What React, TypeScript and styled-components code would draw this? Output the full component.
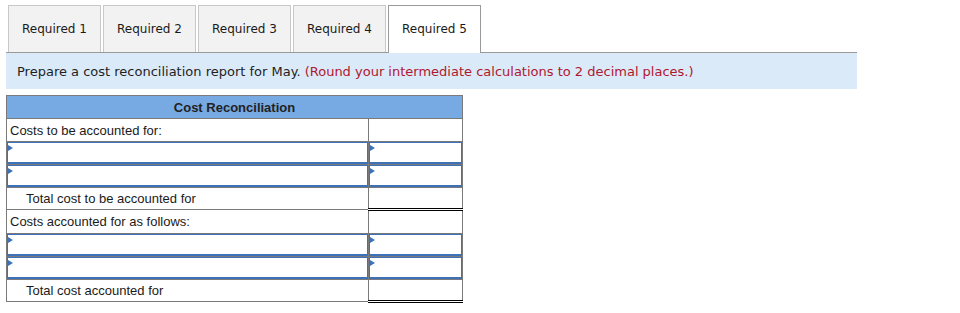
import React from "react";
import styled, { createGlobalStyle } from "styled-components";

const Global = createGlobalStyle`
  html, body { margin: 0; padding: 0; background: #fff; }
  body { font-family: "DejaVu Sans", Verdana, sans-serif; color: #1f1f1f; }
`;

const Page = styled.div`
  padding: 5px 0 0 6px;
  width: 851px;
`;

const TabBar = styled.div`
  display: flex;
  gap: 2px;
  padding-left: 2px;
  border-bottom: 1px solid #9a9a9a;
  height: 47px;
`;

const Tab = styled.div<{ $active?: boolean }>`
  box-sizing: border-box;
  width: 93px;
  height: ${(p) => (p.$active ? "48px" : "47px")};
  display: flex;
  align-items: center;
  justify-content: center;
  font-size: 12px;
  color: #1a1a1a;
  background: ${(p) => (p.$active ? "#fff" : "#f2f2f2")};
  border: 1px solid ${(p) => (p.$active ? "#9a9a9a" : "#c8c8c8")};
  border-bottom: none;
  padding-bottom: ${(p) => (p.$active ? "1px" : "0")};
`;

const Banner = styled.div`
  height: 36px;
  background: #dbeaf8;
  display: flex;
  align-items: center;
  padding-left: 11px;
  font-size: 13px;
  color: #1f1f1f;
`;

const Hint = styled.span`
  color: #b01731;
  margin-left: 4px;
`;

const Table = styled.table`
  margin-top: 6px;
  border-collapse: collapse;
  width: 457px;
  font-family: "Liberation Sans", Arial, sans-serif;
  font-size: 13px;
  color: #1a1a1a;
`;

const HeadCell = styled.th`
  height: 22px;
  padding: 0;
  background: #77a9e2;
  border: 1px solid #7a7a7a;
  font-size: 13px;
  font-weight: bold;
  color: #222;
  text-align: center;
`;

const LabelCell = styled.td<{ $indent?: boolean; $total?: boolean }>`
  height: ${(p) => (p.$total ? "20px" : "22px")};
  padding: 0 0 0 ${(p) => (p.$indent ? "19px" : "3px")};
  border: 1px solid #7a7a7a;
  white-space: nowrap;
`;

const AmountCell = styled.td<{ $total?: boolean }>`
  width: 93px;
  height: ${(p) => (p.$total ? "20px" : "22px")};
  padding: 0;
  border: 1px solid #7a7a7a;
  ${(p) =>
    p.$total &&
    `border-top: 1px solid #000; border-bottom: 3px double #000;`}
`;

const InputCell = styled.td`
  height: 22px;
  padding: 0;
  border: 1px solid #7a7a7a;
`;

const Field = styled.div`
  box-sizing: border-box;
  height: 22px;
  border: 1px solid #3d72b8;
  border-bottom-width: 2px;
  position: relative;
`;

const Marker = styled.span`
  position: absolute;
  left: 0;
  top: 2px;
  width: 0;
  height: 0;
  border-top: 3px solid transparent;
  border-bottom: 3px solid transparent;
  border-left: 5px solid #3d72b8;
`;

const InputRow = () => (
  <tr>
    <InputCell>
      <Field>
        <Marker />
      </Field>
    </InputCell>
    <InputCell>
      <Field>
        <Marker />
      </Field>
    </InputCell>
  </tr>
);

const tabs = ["Required 1", "Required 2", "Required 3", "Required 4", "Required 5"];

export default function App() {
  return (
    <>
      <Global />
      <Page>
        <TabBar>
          {tabs.map((t, i) => (
            <Tab key={t} $active={i === tabs.length - 1}>
              {t}
            </Tab>
          ))}
        </TabBar>
        <Banner>
          Prepare a cost reconciliation report for May.
          <Hint>(Round your intermediate calculations to 2 decimal places.)</Hint>
        </Banner>
        <Table>
          <thead>
            <tr>
              <HeadCell colSpan={2}>Cost Reconciliation</HeadCell>
            </tr>
          </thead>
          <tbody>
            <tr>
              <LabelCell>Costs to be accounted for:</LabelCell>
              <AmountCell />
            </tr>
            <InputRow />
            <InputRow />
            <tr>
              <LabelCell $indent $total>
                Total cost to be accounted for
              </LabelCell>
              <AmountCell $total />
            </tr>
            <tr>
              <LabelCell>Costs accounted for as follows:</LabelCell>
              <AmountCell />
            </tr>
            <InputRow />
            <InputRow />
            <tr>
              <LabelCell $indent $total>
                Total cost accounted for
              </LabelCell>
              <AmountCell $total />
            </tr>
          </tbody>
        </Table>
      </Page>
    </>
  );
}
